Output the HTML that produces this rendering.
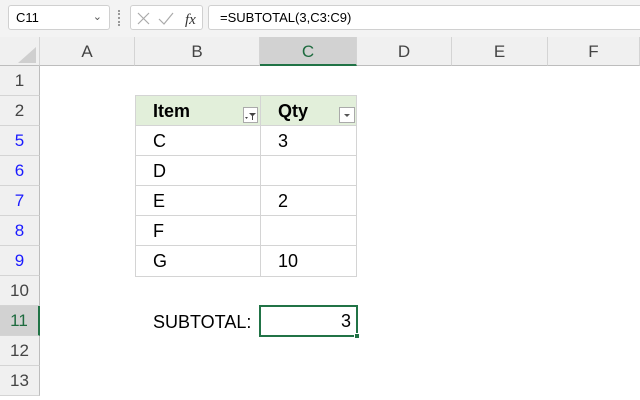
<!DOCTYPE html><html><head><style>
body{margin:0;width:640px;height:400px;overflow:hidden;background:#fff;font-family:"Liberation Sans",sans-serif;position:relative}
.a{position:absolute;box-sizing:border-box}
.ch{top:37px;height:29px;background:#f0f0f0;border-right:1px solid #d4d4d4;border-bottom:1px solid #bdbdbd;text-align:center;line-height:29px;font-size:17px;color:#444}
.rh{left:0;width:40px;height:30px;background:#f0f0f0;border-right:1px solid #bdbdbd;border-bottom:1px solid #d4d4d4;text-align:center;line-height:30px;font-size:17px;color:#444}
.c{font-size:18px;color:#000;line-height:30px}
</style></head><body>
<div class="a" style="left:0;top:0;width:640px;height:37px;background:#f3f3f3"></div>
<div class="a" style="left:8px;top:5px;width:102px;height:25px;background:#fff;border:1px solid #d0d0d0;border-radius:3px;font-size:13px;line-height:23px;padding-left:7px">C11<span style="position:absolute;right:7px;top:0;font-size:11px;color:#555">&#8964;</span></div>
<div class="a" style="left:118px;top:10px;width:2px;height:16px;border-left:2px dotted #999"></div>
<div class="a" style="left:130px;top:5px;width:73px;height:25px;background:#fff;border:1px solid #d0d0d0;border-radius:3px">
<svg width="73" height="25" style="position:absolute;left:0;top:0"><path d="M7 7l11 11M18 7L7 18" stroke="#aaa" stroke-width="1.2"/><path d="M28 13l5 5 9-11" stroke="#aaa" stroke-width="1.2" fill="none"/><text x="54" y="18" font-family="Liberation Serif" font-style="italic" font-size="15" fill="#333">fx</text></svg></div>
<div class="a" style="left:208px;top:5px;width:440px;height:25px;background:#fff;border:1px solid #d0d0d0;border-radius:3px;font-size:13px;line-height:23px;padding-left:11px">=SUBTOTAL(3,C3:C9)</div>
<div class="a ch" style="left:0;width:40px;background:#f0f0f0"><svg width="38" height="28"><path d="M35 10L35 26L17 26Z" fill="#cfcfcf"/></svg></div>
<div class="a ch" style="left:40px;width:95px">A</div>
<div class="a ch" style="left:135px;width:125px">B</div>
<div class="a ch" style="left:260px;width:97px;background:#d2d2d2;color:#1e6b3f;border-bottom:2px solid #217346">C</div>
<div class="a ch" style="left:357px;width:95px">D</div>
<div class="a ch" style="left:452px;width:96px">E</div>
<div class="a ch" style="left:548px;width:92px">F</div>
<div class="a rh" style="top:66px">1</div>
<div class="a rh" style="top:96px">2</div>
<div class="a rh" style="top:126px;color:#1a1aff">5</div>
<div class="a rh" style="top:156px;color:#1a1aff">6</div>
<div class="a rh" style="top:186px;color:#1a1aff">7</div>
<div class="a rh" style="top:216px;color:#1a1aff">8</div>
<div class="a rh" style="top:246px;color:#1a1aff">9</div>
<div class="a rh" style="top:276px">10</div>
<div class="a rh" style="top:306px;background:#d2d2d2;color:#1e6b3f;border-right:2px solid #217346">11</div>
<div class="a rh" style="top:336px">12</div>
<div class="a rh" style="top:366px">13</div>
<div class="a" style="left:135px;top:95px;width:222px;height:31px;background:#e2efda;border:1px solid #d4d4d4"></div>
<div class="a" style="left:135px;top:95px;width:222px;height:182px;border:1px solid #d4d4d4"></div>
<div class="a" style="left:260px;top:95px;width:1px;height:182px;background:#d4d4d4"></div>
<div class="a" style="left:135px;top:155px;width:222px;height:1px;background:#d4d4d4"></div>
<div class="a" style="left:135px;top:185px;width:222px;height:1px;background:#d4d4d4"></div>
<div class="a" style="left:135px;top:215px;width:222px;height:1px;background:#d4d4d4"></div>
<div class="a" style="left:135px;top:245px;width:222px;height:1px;background:#d4d4d4"></div>
<div class="a c" style="left:153px;top:96px;font-weight:bold">Item</div>
<div class="a c" style="left:278px;top:96px;font-weight:bold">Qty</div>
<div class="a" style="left:243px;top:107px;width:15px;height:16px;background:#fff;border:1px solid #aaa"><svg width="13" height="14"><path d="M5 5h7l-3 3v4h-1v-4z" fill="#444"/><path d="M1 9h3l-1.5 2z" fill="#444"/></svg></div>
<div class="a" style="left:339px;top:107px;width:16px;height:16px;background:#fff;border:1px solid #aaa"><svg width="14" height="14"><path d="M4 6h6l-3 3z" fill="#555"/></svg></div>
<div class="a c" style="left:153px;top:126px">C</div><div class="a c" style="left:278px;top:126px">3</div>
<div class="a c" style="left:153px;top:156px">D</div>
<div class="a c" style="left:153px;top:186px">E</div><div class="a c" style="left:278px;top:186px">2</div>
<div class="a c" style="left:153px;top:216px">F</div>
<div class="a c" style="left:153px;top:246px">G</div><div class="a c" style="left:278px;top:246px">10</div>
<div class="a c" style="left:153px;top:307px">SUBTOTAL:</div>
<div class="a c" style="left:259px;top:305px;width:99px;height:32px;border:2px solid #217346;text-align:right;padding-right:5px;line-height:28px">3</div>
<div class="a" style="left:354px;top:333px;width:6px;height:6px;background:#217346;border:1px solid #fff"></div>
</body></html>
